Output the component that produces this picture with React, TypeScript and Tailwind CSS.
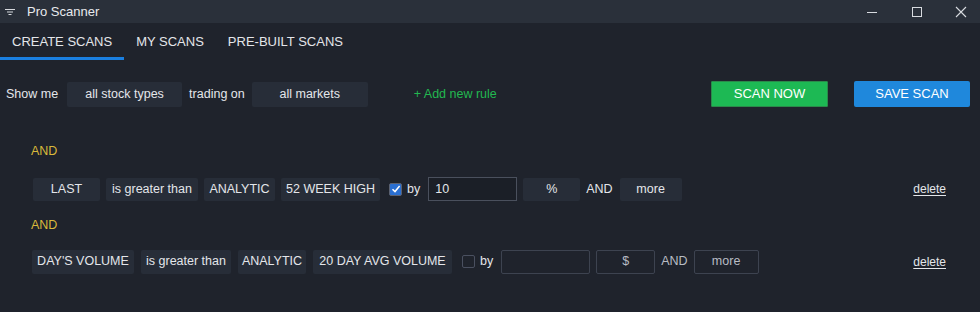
import React from 'react';

const font = { fontFamily: '"Liberation Sans", Arial, sans-serif' };

function Box({ w, children, outline }: { w: string; children: React.ReactNode; outline?: boolean }) {
  return (
    <div
      className={`${w} h-full flex items-center justify-center rounded-[2px] text-[12.5px] text-[#e4e6ea] ${
        outline ? 'border border-[#3d4350]' : 'bg-[#272d38]'
      }`}
    >
      {children}
    </div>
  );
}

function Check({ checked }: { checked?: boolean }) {
  return checked ? (
    <div className="w-[13px] h-[13px] rounded-[2px] border border-[#5b6170] bg-[#2a6fd1] flex items-center justify-center">
      <svg width="10" height="10" viewBox="0 0 10 10">
        <path d="M1.5 5.2 L4 7.6 L8.6 2" fill="none" stroke="#fff" strokeWidth="1.5" />
      </svg>
    </div>
  ) : (
    <div className="w-[13px] h-[13px] rounded-[2px] border border-[#4a5060]" />
  );
}

export default function App() {
  return (
    <div className="w-[980px] h-[312px] bg-[#1f232c] text-[#e4e6ea] overflow-hidden" style={font}>
      {/* Title bar */}
      <div className="h-[23px] bg-[#2a303a] flex items-center">
        <svg className="ml-[5px]" width="10" height="10" viewBox="0 0 10 10">
          <path d="M0 2.5 H10 M2 5 H8 M3.5 7.5 H6.5" stroke="#d6d9de" strokeWidth="1.2" />
        </svg>
        <span className="ml-[12px] text-[13px] text-[#e8eaee]">Pro Scanner</span>
        <div className="ml-auto flex items-center h-full">
          <svg width="12" height="12" viewBox="0 0 12 12" className="mr-[33px]">
            <path d="M1 6.5 H11" stroke="#d8dbe0" strokeWidth="1" />
          </svg>
          <svg width="12" height="12" viewBox="0 0 12 12" className="mr-[32px]">
            <rect x="1.5" y="1.5" width="9" height="9" fill="none" stroke="#d8dbe0" strokeWidth="1" />
          </svg>
          <svg width="12" height="12" viewBox="0 0 12 12" className="mr-[13px]">
            <path d="M1 1 L11 11 M11 1 L1 11" stroke="#d8dbe0" strokeWidth="1.1" />
          </svg>
        </div>
      </div>

      {/* Tabs */}
      <div className="h-[38px] flex items-stretch">
        <div className="relative px-[12px] flex items-center text-[13px]">
          CREATE SCANS
          <span className="absolute left-0 right-0 bottom-[1px] h-[3px] bg-[#1a7fe0]" />
        </div>
        <div className="px-[12px] flex items-center text-[13px]">MY SCANS</div>
        <div className="px-[12px] flex items-center text-[13px]">PRE-BUILT SCANS</div>
      </div>

      {/* Top row */}
      <div className="mt-[20px] h-[26px] flex items-center text-[12.5px]">
        <span className="ml-[6px]">Show me</span>
        <div className="ml-[9px] h-[25px]">
          <Box w="w-[115px]">all stock types</Box>
        </div>
        <span className="ml-[7px]">trading on</span>
        <div className="ml-[7px] h-[25px]">
          <Box w="w-[116px]">all markets</Box>
        </div>
        <span className="ml-[46px] text-[#22b850]">+ Add new rule</span>
        <button className="ml-auto w-[117px] h-[26px] bg-[#1db954] border border-[#2a8a4a] text-white text-[13px] rounded-[1px]">
          SCAN NOW
        </button>
        <button className="ml-[26px] mr-[10px] w-[116px] h-[26px] bg-[#1f88dc] text-white text-[13px] rounded-[2px]">
          SAVE SCAN
        </button>
      </div>

      {/* Rule 1 */}
      <div className="mt-[35px] ml-[31px] text-[12.5px] text-[#d9b93b]">AND</div>
      <div className="mt-[17px] h-[23px] flex items-center text-[12.5px]">
        <div className="ml-[33px] h-full flex items-center gap-[6px]">
          <Box w="w-[67px]">LAST</Box>
          <Box w="w-[92px]">is greater than</Box>
          <Box w="w-[71px]">ANALYTIC</Box>
          <Box w="w-[99px]">52 WEEK HIGH</Box>
        </div>
        <div className="ml-[9px]">
          <Check checked />
        </div>
        <span className="ml-[5px]">by</span>
        <div className="ml-[8px] w-[89px] h-[24px] border border-[#4a505d] bg-[#1b1f27] flex items-center px-[6px]">10</div>
        <div className="ml-[6px] h-full">
          <Box w="w-[57px]">%</Box>
        </div>
        <span className="ml-[6px]">AND</span>
        <div className="ml-[7px] h-full">
          <Box w="w-[62px]">more</Box>
        </div>
        <span className="ml-auto mr-[34px] underline underline-offset-2 text-[12px]">delete</span>
      </div>

      {/* Rule 2 */}
      <div className="mt-[15px] ml-[31px] text-[12.5px] text-[#d9b93b]">AND</div>
      <div className="mt-[15px] h-[24px] flex items-center text-[12.5px]">
        <div className="ml-[32px] h-full flex items-center gap-[7px]">
          <Box w="w-[102px]">DAY'S VOLUME</Box>
          <Box w="w-[90px]">is greater than</Box>
          <Box w="w-[68px]">ANALYTIC</Box>
          <Box w="w-[139px]">20 DAY AVG VOLUME</Box>
        </div>
        <div className="ml-[10px]">
          <Check />
        </div>
        <span className="ml-[5px]">by</span>
        <div className="ml-[8px] w-[89px] h-[24px] border border-[#3d4350] rounded-[2px]" />
        <div className="ml-[6px] h-full">
          <Box w="w-[59px]" outline>
            <span className="text-[#b8bcc4]">$</span>
          </Box>
        </div>
        <span className="ml-[6px] text-[#b8bcc4]">AND</span>
        <div className="ml-[6px] h-full">
          <Box w="w-[65px]" outline>
            <span className="text-[#b8bcc4]">more</span>
          </Box>
        </div>
        <span className="ml-auto mr-[34px] underline underline-offset-2 text-[12px]">delete</span>
      </div>
    </div>
  );
}
